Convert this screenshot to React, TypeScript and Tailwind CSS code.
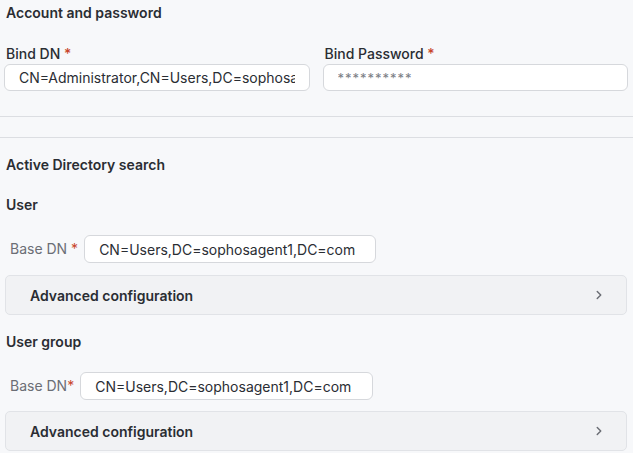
import { ChevronRight } from "lucide-react";

const Star = () => <span className="text-[#c8452a]">*</span>;

const Heading = ({ children, className = "" }: { children: React.ReactNode; className?: string }) => (
  <h3 className={`px-[6px] text-[14px] leading-5 font-semibold text-[#2a2d33] ${className}`}>
    {children}
  </h3>
);

const Field = ({ label, value, muted }: { label: string; value: string; muted?: boolean }) => (
  <div className="flex flex-col">
    <label className="pl-[2px] text-[14px] leading-5 font-medium text-[#2a2d33]">
      {label} <Star />
    </label>
    <input
      readOnly
      value={value}
      className={`h-[27px] w-full rounded-[6px] border border-[#d6d8dc] bg-white px-[14px] outline-none ${
        muted ? "text-[13px] tracking-[1px] text-[#7a7d84]" : "text-[14px] text-[#2a2d33]"
      }`}
    />
  </div>
);

const BaseDn = ({ tight, width, top }: { tight?: boolean; width: string; top: string }) => (
  <div className={`flex items-center pl-[10px] ${top}`}>
    <span className="text-[14px] leading-5 text-[#6b6e75]">
      Base DN{tight ? "" : " "}
      <Star />
    </span>
    <div
      className={`ml-[6px] ${width} h-[28px] flex items-center rounded-[6px] border border-[#d6d8dc] bg-white px-[14px] text-[14px] text-[#2a2d33] whitespace-nowrap`}
    >
      CN=Users,DC=sophosagent1,DC=com
    </div>
  </div>
);

const Advanced = ({ top }: { top: string }) => (
  <div
    className={`${top} ml-[5px] mr-[6px] h-[40px] flex items-center justify-between rounded-[5px] border border-[#e1e3e7] bg-[#f1f2f4] pl-[24px] pr-[20px]`}
  >
    <span className="text-[14px] font-semibold text-[#2a2d33]">Advanced configuration</span>
    <ChevronRight size={14} strokeWidth={2.5} className="text-[#6b6e75]" />
  </div>
);

export default function App() {
  return (
    <div
      className="w-full h-[453px] overflow-hidden bg-[#f7f8fa]"
      style={{ fontFamily: "Inter, 'Noto Sans', sans-serif" }}
    >
      <Heading className="pt-[3px]">Account and password</Heading>
      <div className="mt-[21px] grid grid-cols-2 gap-[13px] pl-[4px] pr-[5px]">
        <Field label="Bind DN" value="CN=Administrator,CN=Users,DC=sophosagent1,DC=com" />
        <Field label="Bind Password" value="**********" muted />
      </div>
      <div className="mt-[25px] border-t border-[#dcdee2]" />
      <div className="mt-[20px] border-t border-[#dcdee2]" />

      <Heading className="mt-[17px]">Active Directory search</Heading>
      <Heading className="mt-[20px]">User</Heading>
      <BaseDn width="w-[292px]" top="mt-[20px]" />
      <Advanced top="mt-[12px]" />

      <Heading className="mt-[17px]">User group</Heading>
      <BaseDn tight width="w-[293px]" top="mt-[20px]" />
      <Advanced top="mt-[11px]" />
    </div>
  );
}
